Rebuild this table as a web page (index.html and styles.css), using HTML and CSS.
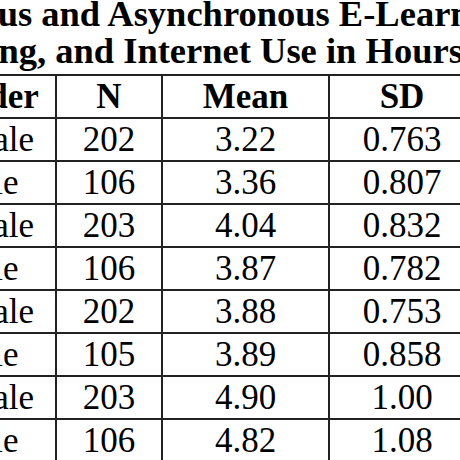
FILE: index.html
```html
<!DOCTYPE html>
<html lang="en">
<head>
    <meta charset="UTF-8">
    <meta name="viewport" content="width=device-width, initial-scale=1.0">
    <title>Gender and E-Learning Table</title>
    <link rel="stylesheet" href="styles.css">
</head>
<body>
    <div class="sheet">
        <div class="caption">
            <div class="caption-line line-one">Synchronous and Asynchronous E-Learning</div>
            <div class="caption-line line-two">Learning, and Internet Use in Hours Per Day</div>
        </div>

        <table class="stats">
            <thead>
                <tr>
                    <th class="col-gender">Gender</th>
                    <th class="col-n">N</th>
                    <th class="col-mean">Mean</th>
                    <th class="col-sd">SD</th>
                </tr>
            </thead>
            <tbody>
                <tr><td>Female</td><td>202</td><td>3.22</td><td>0.763</td></tr>
                <tr><td>Male</td><td>106</td><td>3.36</td><td>0.807</td></tr>
                <tr><td>Female</td><td>203</td><td>4.04</td><td>0.832</td></tr>
                <tr><td>Male</td><td>106</td><td>3.87</td><td>0.782</td></tr>
                <tr><td>Female</td><td>202</td><td>3.88</td><td>0.753</td></tr>
                <tr><td>Male</td><td>105</td><td>3.89</td><td>0.858</td></tr>
                <tr><td>Female</td><td>203</td><td>4.90</td><td>1.00</td></tr>
                <tr><td>Male</td><td>106</td><td>4.82</td><td>1.08</td></tr>
            </tbody>
        </table>
    </div>
</body>
</html>
```

FILE: styles.css
```css
body {
    margin: 0;
    background-color: #fff;
    color: #000;
    font-family: "Liberation Serif", "Times New Roman", serif;
    overflow: hidden;
}
.sheet {
    width: 600px;
}
.caption {
    font-size: 36.5px;
    font-weight: bold;
    line-height: 37px;
    margin-top: -5px;
    margin-bottom: 5px;
}
.caption-line {
    white-space: nowrap;
}
.line-one {
    margin-left: -170px;
}
.line-two {
    margin-left: -107px;
}
.stats {
    border-collapse: collapse;
    margin-left: -92px;
    table-layout: fixed;
    font-size: 35px;
}
.stats th,
.stats td {
    border: 2px solid #222;
    padding: 0;
    height: 41px;
    line-height: 41px;
    text-align: center;
    white-space: nowrap;
}
.stats th {
    font-weight: bold;
}
.col-gender {
    width: 145px;
}
.col-n {
    width: 104px;
}
.col-mean {
    width: 165px;
}
.col-sd {
    width: 144px;
}
```
